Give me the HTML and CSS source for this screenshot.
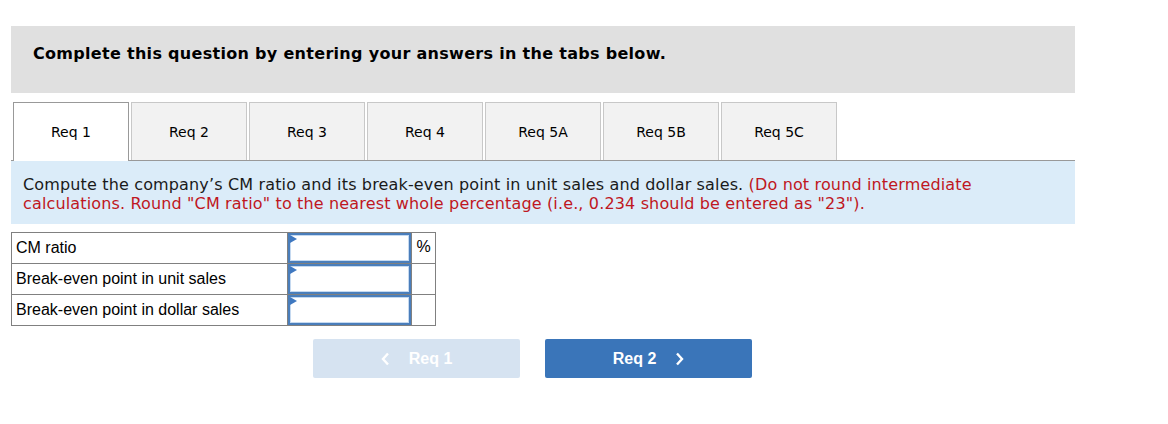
FILE: index.html
```html
<!DOCTYPE html>
<html lang="en">
<head>
    <meta charset="UTF-8">
    <title>Req 1</title>
    <link rel="stylesheet" href="styles.css">
</head>
<body>
    <div class="wrap">
        <div class="header">Complete this question by entering your answers in the tabs below.</div>

        <div class="tabs">
            <div class="tab active">Req 1</div>
            <div class="tab">Req 2</div>
            <div class="tab">Req 3</div>
            <div class="tab">Req 4</div>
            <div class="tab">Req 5A</div>
            <div class="tab">Req 5B</div>
            <div class="tab">Req 5C</div>
        </div>

        <div class="instructions">
            <p>Compute the company’s CM ratio and its break-even point in unit sales and dollar sales. <span class="note">(Do not round intermediate calculations. Round "CM ratio" to the nearest whole percentage (i.e., 0.234 should be entered as "23").</span></p>
        </div>

        <table class="answers">
            <tr>
                <td class="label">CM ratio</td>
                <td class="entry"><div class="field"></div></td>
                <td class="unit">%</td>
            </tr>
            <tr>
                <td class="label">Break-even point in unit sales</td>
                <td class="entry"><div class="field"></div></td>
                <td class="unit"></td>
            </tr>
            <tr>
                <td class="label">Break-even point in dollar sales</td>
                <td class="entry"><div class="field"></div></td>
                <td class="unit"></td>
            </tr>
        </table>

        <div class="nav">
            <button class="btn prev" disabled>
                <svg class="chev left" width="9" height="14" viewBox="0 0 9 14"><path d="M7 1.5 L2 7 L7 12.5" fill="none" stroke="#fff" stroke-width="2.4"/></svg>
                Req 1
            </button>
            <button class="btn next">
                Req 2
                <svg class="chev right" width="9" height="14" viewBox="0 0 9 14"><path d="M2 1.5 L7 7 L2 12.5" fill="none" stroke="#fff" stroke-width="2.4"/></svg>
            </button>
        </div>
    </div>
</body>
</html>
```

FILE: styles.css
```css
body {
    margin: 0;
    background: #fff;
    color: #000;
}
.wrap {
    width: 1064px;
    margin: 26px 0 0 11px;
    font-family: "DejaVu Sans", Verdana, sans-serif;
}
.header {
    height: 67px;
    box-sizing: border-box;
    padding: 18px 0 0 22px;
    background: #e0e0e0;
    font-size: 16px;
    letter-spacing: 0.3px;
    font-weight: bold;
}
.tabs {
    display: flex;
    gap: 2px;
    margin-top: 9px;
    padding-left: 2px;
    border-bottom: 1px solid #999;
    height: 58px;
}
.tab {
    width: 116px;
    height: 58px;
    box-sizing: border-box;
    border: 1px solid #c8c8c8;
    border-bottom: none;
    background: #f2f2f2;
    font-size: 14px;
    display: flex;
    align-items: center;
    justify-content: center;
}
.tab.active {
    background: #fff;
    border-color: #999;
    height: 59px;
    position: relative;
    z-index: 1;
}
.instructions {
    background: #dbecf9;
    padding: 14px 12px 11px;
    color: #1a1a1a;
}
.instructions p {
    margin: 0;
    font-size: 16px;
    letter-spacing: 0.15px;
    line-height: 19px;
}
.note {
    color: #bf1722;
}
.answers {
    border-collapse: collapse;
    margin-top: 8px;
    font-family: "Liberation Sans", Arial, sans-serif;
    font-size: 16px;
}
.answers td {
    border: 1px solid #808080;
    height: 30px;
    padding: 0;
}
.label {
    width: 271px;
    padding-left: 4px !important;
}
.entry {
    width: 123px;
    vertical-align: top;
}
.field {
    position: relative;
    height: 30px;
    box-sizing: border-box;
    border: 2px solid #4a7ebb;
    box-shadow: inset 0 0 0 1px #c5d9f0;
    background: #fff;
}
.field::before {
    content: "";
    position: absolute;
    left: 0;
    top: 0;
    border-left: 7px solid #3f78c0;
    border-top: 4px solid transparent;
    border-bottom: 4px solid transparent;
}
.unit {
    width: 23px;
    text-align: center;
    vertical-align: top;
    padding-top: 5px !important;
    height: 25px !important;
}
.nav {
    display: flex;
    gap: 25px;
    margin: 13px 0 0 302px;
}
.btn {
    width: 207px;
    height: 39px;
    border: none;
    border-radius: 2px;
    color: #fff;
    font-family: "Liberation Sans", Arial, sans-serif;
    font-size: 16px;
    font-weight: bold;
    cursor: pointer;
    display: flex;
    align-items: center;
    justify-content: center;
}
.prev {
    background: #d6e3f1;
}
.next {
    background: #3a75b9;
}
.chev.left {
    margin-right: 19px;
}
.chev.right {
    margin-left: 19px;
}
```
